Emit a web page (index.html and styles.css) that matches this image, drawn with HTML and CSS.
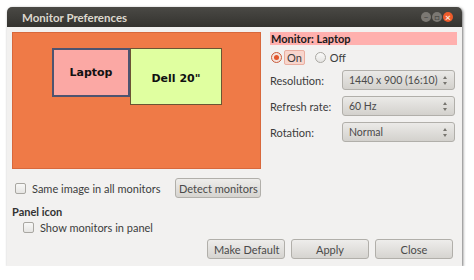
FILE: index.html
```html
<!DOCTYPE html>
<html lang="en">
<head>
    <meta charset="UTF-8">
    <title>Monitor Preferences</title>
    <link rel="stylesheet" href="styles.css">
</head>
<body>
    <div class="window">
        <div class="titlebar">
            <span class="title">Monitor Preferences</span>
            <div class="win-buttons">
                <span class="wbtn wbtn-min">&minus;</span>
                <span class="wbtn wbtn-max">&#9633;</span>
                <span class="wbtn wbtn-close">&times;</span>
            </div>
        </div>

        <div class="content">
            <div class="top-row">
                <div class="left-col">
                    <div class="canvas">
                        <div class="monitors">
                            <div class="monitor monitor-laptop">Laptop</div>
                            <div class="monitor monitor-dell">Dell 20"</div>
                        </div>
                    </div>
                    <div class="same-row">
                        <label class="check"><span class="box"></span>Same image in all monitors</label>
                        <button class="btn btn-detect">Detect monitors</button>
                    </div>
                </div>

                <div class="right-col">
                    <div class="monitor-title">Monitor: Laptop</div>
                    <div class="radio-row">
                        <span class="radio radio-on"><span class="dot"></span></span>
                        <span class="radio-label focused">On</span>
                        <span class="radio"></span>
                        <span class="radio-label">Off</span>
                    </div>
                    <div class="field">
                        <span class="field-label">Resolution:</span>
                        <div class="combo">1440 x 900 (16:10)<span class="spin"></span></div>
                    </div>
                    <div class="field">
                        <span class="field-label">Refresh rate:</span>
                        <div class="combo">60 Hz<span class="spin"></span></div>
                    </div>
                    <div class="field">
                        <span class="field-label">Rotation:</span>
                        <div class="combo">Normal<span class="spin"></span></div>
                    </div>
                </div>
            </div>

            <div class="panel-section">
                <div class="section-title">Panel icon</div>
                <label class="check check-indent"><span class="box"></span>Show monitors in panel</label>
            </div>

            <div class="actions">
                <button class="btn btn-wide">Make Default</button>
                <button class="btn btn-wide">Apply</button>
                <button class="btn btn-wide">Close</button>
            </div>
        </div>
    </div>
</body>
</html>
```

FILE: styles.css
```css
body {
    margin: 0;
    padding: 7px 0 0 7px;
    background: #ffffff;
    font-family: Lato, "Open Sans", sans-serif;
    font-size: 11px;
    color: #3c3c3c;
    white-space: nowrap;
}

.window {
    width: 455px;
    height: 259px;
    background: #f2f1f0;
    border-radius: 5px 5px 0 0;
    box-shadow: 1px 1px 3px rgba(0,0,0,0.55);
    overflow: hidden;
}

.titlebar {
    height: 20px;
    display: flex;
    align-items: center;
    justify-content: space-between;
    padding: 0 9px 0 15px;
    background: linear-gradient(#4a4945, #34332f);
}

.title {
    font-weight: bold;
    font-size: 11.5px;
    color: #dcd8ce;
}

.win-buttons {
    display: flex;
    gap: 1px;
}

.wbtn {
    width: 10px;
    height: 10px;
    border-radius: 50%;
    background: #7b7873;
    color: #4b4a46;
    font-size: 8px;
    line-height: 10px;
    text-align: center;
    font-weight: bold;
}

.wbtn-close {
    background: #ee5b2b;
    color: #fbe6de;
    font-size: 10px;
}

.content {
    padding: 5px 5px 0 5px;
}

.top-row {
    display: flex;
    gap: 9px;
}

.left-col {
    width: 249px;
    flex: none;
}

.canvas {
    width: 249px;
    height: 137px;
    background: #ef7a47;
    box-shadow: inset 0 0 0 1px #d8683c;
}

.monitors {
    display: flex;
    align-items: flex-start;
    padding: 16px 0 0 40px;
}

.monitor {
    display: flex;
    align-items: center;
    justify-content: center;
    font-family: "DejaVu Sans", sans-serif;
    font-weight: bold;
    font-size: 11px;
    color: #111;
    box-sizing: border-box;
}

.monitor-laptop {
    width: 78px;
    height: 49px;
    background: #fba8a4;
    border: 2px solid #4d5470;
}

.monitor-dell {
    width: 92px;
    height: 57px;
    background: #e0ffa0;
    border: 1px solid #6b5533;
    padding-top: 3px;
}

.same-row {
    display: flex;
    align-items: center;
    justify-content: space-between;
    margin-top: 9px;
    padding-left: 3px;
}

.check {
    display: flex;
    align-items: center;
    gap: 6px;
}

.box {
    width: 9px;
    height: 9px;
    border: 1px solid #a9a7a2;
    border-radius: 2px;
    background: linear-gradient(#f8f8f7, #e6e5e3);
}

.btn {
    font-family: inherit;
    font-size: 11px;
    color: #4a4a4a;
    height: 20px;
    padding: 0 6px;
    border: 1px solid #b1afaa;
    border-radius: 3px;
    background: linear-gradient(#eeedeb, #d6d4d0);
    white-space: nowrap;
}

.btn-detect {
    width: 86px;
    padding: 0 3px;
}

.right-col {
    width: 187px;
}

.monitor-title {
    height: 13px;
    line-height: 13px;
    background: #ffb0ae;
    font-weight: bold;
    color: #1a1a1a;
    padding-left: 1px;
}

.radio-row {
    display: flex;
    align-items: center;
    margin-top: 5px;
    padding-left: 1px;
    height: 15px;
}

.radio {
    width: 9px;
    height: 9px;
    border-radius: 50%;
    border: 1px solid #aaa8a3;
    background: linear-gradient(#fafaf9, #e5e4e2);
    display: flex;
    align-items: center;
    justify-content: center;
}

.radio-on {
    border-color: #c85c3c;
    background: #f6e3dc;
}

.dot {
    width: 5px;
    height: 5px;
    border-radius: 50%;
    background: #e2562d;
}

.radio-label {
    padding: 0 2px;
    margin: 0 10px 0 2px;
}

.focused {
    background: #f8d5cc;
    border: 1px solid #eaaea0;
    border-radius: 2px;
}

.field {
    display: flex;
    align-items: center;
    margin-top: 5px;
}

.field + .field {
    margin-top: 6px;
}

.field-label {
    width: 72px;
}

.combo {
    flex: 1;
    height: 20px;
    line-height: 20px;
    box-sizing: border-box;
    margin-right: 2px;
    padding: 0 7px 0 6px;
    border: 1px solid #b1afaa;
    border-radius: 3px;
    background: linear-gradient(#ebeae8, #d3d1cd);
    color: #4a4a4a;
    font-size: 10.5px;
    display: flex;
    justify-content: space-between;
    align-items: center;
}

.spin {
    width: 4px;
    height: 9px;
    position: relative;
}

.spin::before,
.spin::after {
    content: "";
    position: absolute;
    left: 0;
    border-left: 2px solid transparent;
    border-right: 2px solid transparent;
}

.spin::before {
    top: 0;
    border-bottom: 3px solid #77756f;
}

.spin::after {
    bottom: 0;
    border-top: 3px solid #77756f;
}

.panel-section {
    margin-top: 7px;
}

.section-title {
    font-weight: bold;
    color: #333;
}

.check-indent {
    padding-left: 11px;
    margin-top: 3px;
}

.actions {
    display: flex;
    justify-content: flex-end;
    gap: 6px;
    margin-top: 5px;
    padding-right: 4px;
}

.btn-wide {
    width: 78px;
}
```
